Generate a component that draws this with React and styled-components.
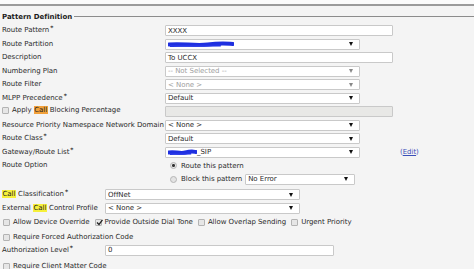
import React from "react";
import styled, { createGlobalStyle } from "styled-components";

const GlobalStyle = createGlobalStyle`
  html, body { margin: 0; padding: 0; background: #f4f4f4; }
  body { font-family: "DejaVu Sans", Verdana, sans-serif; font-size: 7px; letter-spacing: -0.04px; color: #2b2b2b; }
`;

const Page = styled.div`
  width: 474px;
  height: 269px;
  overflow: hidden;
  background: #f4f4f4;
`;

const TopBand = styled.div`
  height: 4px;
  background: #fbfbfb;
  border-bottom: 2px solid #9b9b9b;
`;

const Legend = styled.div`
  display: flex;
  align-items: center;
  gap: 2px;
  height: 9px;
  margin-top: 6px;
  padding-left: 2px;
  font-weight: bold;
  color: #1d1d1d;
  &::after {
    content: "";
    flex: 1;
    height: 1px;
    background: #8c8c8c;
  }
`;

const Section = styled.div`
  display: grid;
  grid-template-columns: ${(p) => p.$labelW}px 1fr;
  grid-auto-rows: ${(p) => p.$rowH}px;
  align-items: center;
  padding-left: 2px;
  margin-top: ${(p) => p.$mt || 0}px;
`;

const Label = styled.div`
  white-space: nowrap;
  color: #2b2b2b;
  line-height: 9px;
`;

const Req = styled.sup`
  font-weight: bold;
  font-size: 6px;
  vertical-align: 2px;
  margin-left: 1px;
  line-height: 0;
`;

const Hl = styled.span`
  background: ${(p) => (p.$orange ? "#f2a13a" : "#f6f03a")};
  color: #222;
  padding: 0 0.5px;
`;

const Control = styled.div`
  display: flex;
  align-items: center;
  gap: 4px;
  height: 11px;
`;

const Box = styled.div`
  box-sizing: border-box;
  width: ${(p) => p.$w}px;
  height: 11px;
  background: ${(p) => (p.$disabled ? "#e8e8e6" : "#ffffff")};
  border: 1px solid #c9c9c9;
  border-radius: 1px;
  display: flex;
  align-items: center;
  padding: 0 2px 0 2px;
  color: ${(p) => (p.$muted ? "#a0a0a0" : "#2b2b2b")};
  white-space: nowrap;
  overflow: hidden;
`;

const Arrow = styled.span`
  margin-left: auto;
  margin-right: 4px;
  width: 0;
  height: 0;
  border-left: 2.5px solid transparent;
  border-right: 2.5px solid transparent;
  border-top: 4px solid ${(p) => (p.$muted ? "#888" : "#111")};
`;

const Select = ({ w, muted, children }) => (
  <Box $w={w} $muted={muted}>
    {children}
    <Arrow $muted={muted} />
  </Box>
);

const EditLink = styled.span`
  margin-left: 36px;
  color: #3a4fb8;
  a {
    color: #3a4fb8;
    text-decoration: underline;
  }
`;

const RadioLine = styled.div`
  display: flex;
  align-items: center;
  gap: 3px;
  padding-left: 5px;
  height: 11px;
  white-space: nowrap;
`;

const RadioDot = styled.span`
  box-sizing: border-box;
  width: 7px;
  height: 7px;
  border-radius: 50%;
  border: 1px solid #b5b5b5;
  background: ${(p) => (p.$on ? "radial-gradient(circle, #333 0 1.3px, #e6e6e6 1.6px)" : "#e3e3e3")};
  margin-right: 1px;
`;

const CheckRow = styled.div`
  display: flex;
  align-items: center;
  padding-left: 3px;
  height: ${(p) => p.$h || 13}px;
  margin-top: ${(p) => p.$mt || 0}px;
  white-space: nowrap;
`;

const CheckItem = styled.span`
  display: inline-flex;
  align-items: center;
  gap: 3px;
  margin-right: ${(p) => p.$mr || 0}px;
`;

const CheckBox = styled.span`
  box-sizing: border-box;
  width: 7px;
  height: 7px;
  border: 1px solid #b3b3b3;
  border-radius: 1px;
  background: #e6e6e6;
  position: relative;
  display: inline-flex;
  align-items: center;
  justify-content: center;
`;

const Scribble = ({ w }) => (
  <svg width={w} height="7" viewBox={`0 0 ${w} 7`} style={{ display: "block" }}>
    <path
      d={`M1 3.5 C ${w * 0.2} 2, ${w * 0.4} 5, ${w * 0.6} 3.5 S ${w * 0.85} 2.5, ${w - 1} 3`}
      stroke="#1e2fe0"
      strokeWidth="4"
      fill="none"
      strokeLinecap="round"
    />
    <path d={`M2 5 L ${w * 0.8} 4.5`} stroke="#2535e6" strokeWidth="2" fill="none" />
  </svg>
);

const Check = ({ on }) => (
  <CheckBox>
    {on && (
      <svg width="7" height="7" viewBox="0 0 7 7" style={{ position: "absolute", left: 0, top: -1 }}>
        <path d="M1 3.5 L3 5.5 L6.5 0.8" stroke="#222" strokeWidth="1.3" fill="none" />
      </svg>
    )}
  </CheckBox>
);

export default function App() {
  return (
    <Page>
      <GlobalStyle />
      <TopBand />
      <Legend>Pattern Definition</Legend>
      <Section $labelW={163} $rowH={13.5} $mt={3}>
        <Label>Route Pattern<Req>*</Req></Label>
        <Control><Box $w={228}>XXXX</Box></Control>

        <Label>Route Partition</Label>
        <Control><Select w={195}><Scribble w={66} /></Select></Control>

        <Label>Description</Label>
        <Control><Box $w={228}>To UCCX</Box></Control>

        <Label>Numbering Plan</Label>
        <Control><Select w={195} muted>-- Not Selected --</Select></Control>

        <Label>Route Filter</Label>
        <Control><Select w={195} muted>&lt; None &gt;</Select></Control>

        <Label>MLPP Precedence<Req>*</Req></Label>
        <Control><Select w={195}>Default</Select></Control>

        <Label>
          <CheckItem><CheckBox /> <span>Apply <Hl $orange>Call</Hl> Blocking Percentage</span></CheckItem>
        </Label>
        <Control><Box $w={228} $disabled /></Control>

        <Label>Resource Priority Namespace Network Domain</Label>
        <Control><Select w={195}>&lt; None &gt;</Select></Control>

        <Label>Route Class<Req>*</Req></Label>
        <Control><Select w={195}>Default</Select></Control>

        <Label>Gateway/Route List<Req>*</Req></Label>
        <Control>
          <Select w={195}><Scribble w={29} />_SIP</Select>
          <EditLink>(<a>Edit</a>)</EditLink>
        </Control>

        <Label>Route Option</Label>
        <RadioLine><RadioDot $on />Route this pattern</RadioLine>

        <Label />
        <RadioLine><RadioDot />Block this pattern <Select w={110}>No Error</Select></RadioLine>
      </Section>

      <Section $labelW={103} $rowH={13.5} $mt={2}>
        <Label><Hl>Call</Hl> Classification<Req>*</Req></Label>
        <Control><Select w={195}>OffNet</Select></Control>

        <Label>External <Hl>Call</Hl> Control Profile</Label>
        <Control><Select w={195}>&lt; None &gt;</Select></Control>
      </Section>

      <CheckRow $h={14}>
        <CheckItem $mr={5}><Check />Allow Device Override</CheckItem>
        <CheckItem $mr={5}><Check on />Provide Outside Dial Tone</CheckItem>
        <CheckItem $mr={5}><Check />Allow Overlap Sending</CheckItem>
        <CheckItem><Check />Urgent Priority</CheckItem>
      </CheckRow>
      <CheckRow $h={14} $mt={1}>
        <CheckItem><Check />Require Forced Authorization Code</CheckItem>
      </CheckRow>
      <Section $labelW={103} $rowH={12}>
        <Label>Authorization Level<Req>*</Req></Label>
        <Control><Box $w={229}>0</Box></Control>
      </Section>
      <CheckRow $h={14} $mt={3}>
        <CheckItem><Check />Require Client Matter Code</CheckItem>
      </CheckRow>
    </Page>
  );
}
